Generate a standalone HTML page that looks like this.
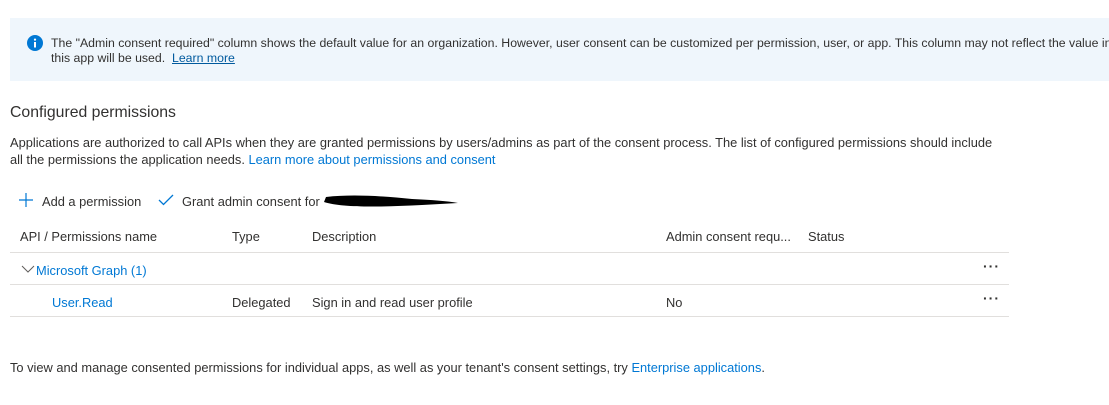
<!DOCTYPE html><html><head><style>
body{margin:0;width:1109px;height:405px;background:#fff;font-family:"Liberation Sans",sans-serif;font-size:12.85px;color:#323130;position:relative;overflow:hidden}
.a{position:absolute;white-space:nowrap}
.l{color:#0078d4}
.line{position:absolute;left:10px;width:999px;height:1px;background:#e1dfdd}
.dots{position:absolute;font-size:14px;letter-spacing:1px;color:#323130;font-weight:bold}
.clip{position:absolute;left:0;top:0;width:1109px;height:405px;overflow:hidden}
</style></head><body><div class="clip">
<div class="a" style="left:10px;top:18px;width:1099px;height:63px;background:#eff6fc"></div>
<svg class="a" style="left:27px;top:35px" width="16" height="16"><circle cx="8" cy="8" r="8" fill="#0078d4"/><rect x="7" y="7" width="2" height="5.5" fill="#fff"/><circle cx="8" cy="4.6" r="1.1" fill="#fff"/></svg>
<div class="a" style="left:51px;top:36px;font-size:12.3px">The "Admin consent required" column shows the default value for an organization. However, user consent can be customized per permission, user, or app. This column may not reflect the value in your</div>
<div class="a" style="left:51px;top:51px;font-size:12.3px">this app will be used.&nbsp; <span style="color:#005a9e;text-decoration:underline">Learn more</span></div>
<div class="a" style="left:10px;top:104px;font-size:15.8px">Configured permissions</div>
<div class="a" style="left:10px;top:135px">Applications are authorized to call APIs when they are granted permissions by users/admins as part of the consent process. The list of configured permissions should include</div>
<div class="a" style="left:10px;top:152px">all the permissions the application needs. <span class="l">Learn more about permissions and consent</span></div>
<svg class="a" style="left:18px;top:192px" width="16" height="16"><path d="M8 1V15M1 8H15" stroke="#0078d4" stroke-width="1.2"/></svg>
<div class="a" style="left:42px;top:194px">Add a permission</div>
<svg class="a" style="left:158px;top:193px" width="16" height="14"><path d="M1 7L5.5 11.5L15 2" stroke="#0078d4" stroke-width="1.3" fill="none"/></svg>
<div class="a" style="left:182px;top:194px">Grant admin consent for</div>
<svg class="a" style="left:322px;top:193px" width="140" height="16"><path d="M4 4C30 1 60 3 90 6C110 7 125 8 136 10L100 12C60 14 20 15 2 9Z" fill="#000"/></svg>
<div class="a" style="left:20px;top:229px">API / Permissions name</div>
<div class="a" style="left:232px;top:229px">Type</div>
<div class="a" style="left:312px;top:229px">Description</div>
<div class="a" style="left:666px;top:229px">Admin consent requ...</div>
<div class="a" style="left:808px;top:229px">Status</div>
<div class="line" style="top:252px"></div>
<svg class="a" style="left:21px;top:265px" width="14" height="8"><path d="M1 1L7 7L13 1" stroke="#605e5c" fill="none"/></svg>
<div class="a l" style="left:36px;top:263px">Microsoft Graph (1)</div>
<div class="dots" style="left:983px;top:258px">···</div>
<div class="line" style="top:284px"></div>
<div class="a l" style="left:52px;top:295px">User.Read</div>
<div class="a" style="left:232px;top:295px">Delegated</div>
<div class="a" style="left:312px;top:295px">Sign in and read user profile</div>
<div class="a" style="left:666px;top:295px">No</div>
<div class="dots" style="left:983px;top:290px">···</div>
<div class="line" style="top:316px"></div>
<div class="a" style="left:10px;top:360px">To view and manage consented permissions for individual apps, as well as your tenant's consent settings, try <span class="l">Enterprise applications</span>.</div>
</div></body></html>
